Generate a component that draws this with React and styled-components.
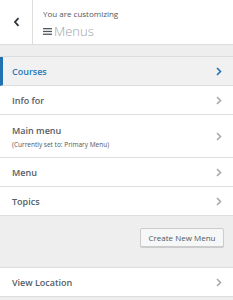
import React from "react";
import styled, { createGlobalStyle } from "styled-components";

const GlobalStyle = createGlobalStyle`
  html, body {
    margin: 0;
    padding: 0;
    background: #eeeeee;
  }
  body {
    font-family: "Open Sans", "Noto Sans", sans-serif;
  }
`;

const Panel = styled.div`
  width: 233px;
  height: 300px;
  overflow: hidden;
  background: #eeeeee;
`;

const Header = styled.div`
  display: flex;
  height: 45px;
  background: #fff;
  border-bottom: 1px solid #dddddd;
  box-sizing: border-box;
`;

const BackButton = styled.div`
  width: 32px;
  display: flex;
  align-items: center;
  justify-content: center;
  border-right: 1px solid #dddddd;
  color: #333;
`;

const Title = styled.div`
  display: flex;
  flex-direction: column;
  justify-content: flex-start;
  padding: 8px 0 0 10px;
`;

const Small = styled.div`
  font-size: 8px;
  color: #50575e;
  line-height: 11px;
`;

const Big = styled.div`
  display: flex;
  align-items: center;
  gap: 2px;
  font-size: 13px;
  font-weight: 300;
  color: #9ea3a8;
  line-height: 17px;
  margin-top: 4px;
`;

const Sections = styled.div`
  margin-top: 11px;
  border-top: 1px solid #dddddd;
`;

const Row = styled.div`
  display: flex;
  align-items: center;
  justify-content: space-between;
  box-sizing: border-box;
  height: ${(p) => (p.tall ? "43px" : "29px")};
  padding: 0 11px 0 12px;
  background: ${(p) => (p.active ? "#f1f1f2" : "#fff")};
  border-bottom: 1px solid #dddddd;
  border-left: ${(p) => (p.active ? "3px solid #2271b1" : "none")};
  padding-left: ${(p) => (p.active ? "9px" : "12px")};
`;

const Label = styled.div`
  font-size: 9px;
  font-weight: 600;
  color: ${(p) => (p.active ? "#2a7ab8" : "#555d66")};
`;

const Sub = styled.div`
  font-size: 6.5px;
  color: #50575e;
  margin-top: 3px;
`;

const Spacer = styled.div`
  display: flex;
  justify-content: flex-end;
  padding: 12px 9px 20px 0;
  border-bottom: 1px solid #dddddd;
`;

const Button = styled.button`
  font-family: "Open Sans", "Noto Sans", sans-serif;
  font-size: 8px;
  color: #50575e;
  background: #f6f7f7;
  border: 1px solid #cccccc;
  border-radius: 2px;
  box-shadow: 0 1px 0 #cccccc;
  height: 19px;
  width: 84px;
  padding: 0;
`;

const Chevron = ({ color }) => (
  <svg width="6" height="9" viewBox="0 0 6 9">
    <path d="M1 1l3.5 3.5L1 8" fill="none" stroke={color} strokeWidth="1.6" />
  </svg>
);

const items = [
  { label: "Courses", active: true },
  { label: "Info for" },
  { label: "Main menu", sub: "(Currently set to: Primary Menu)" },
  { label: "Menu" },
  { label: "Topics" },
];

export default function App() {
  return (
    <Panel>
      <GlobalStyle />
      <Header>
        <BackButton>
          <svg width="7" height="10" viewBox="0 0 7 10">
            <path d="M5.5 1.2L2 5l3.5 3.8" fill="none" stroke="#2c3338" strokeWidth="1.8" />
          </svg>
        </BackButton>
        <Title>
          <Small>You are customizing</Small>
          <Big>
            <svg width="9" height="7" viewBox="0 0 9 7">
              <rect x="0" y="0" width="9" height="1.3" fill="#50575e" />
              <rect x="0" y="2.8" width="9" height="1.3" fill="#50575e" />
              <rect x="0" y="5.6" width="9" height="1.3" fill="#50575e" />
            </svg>
            <span>Menus</span>
          </Big>
        </Title>
      </Header>
      <Sections>
        {items.map((it) => (
          <Row key={it.label} active={it.active} tall={!!it.sub}>
            <div>
              <Label active={it.active}>{it.label}</Label>
              {it.sub && <Sub>{it.sub}</Sub>}
            </div>
            <Chevron color={it.active ? "#2271b1" : "#a7aaad"} />
          </Row>
        ))}
        <Spacer>
          <Button>Create New Menu</Button>
        </Spacer>
        <Row>
          <Label>View Location</Label>
          <Chevron color="#a7aaad" />
        </Row>
      </Sections>
    </Panel>
  );
}
